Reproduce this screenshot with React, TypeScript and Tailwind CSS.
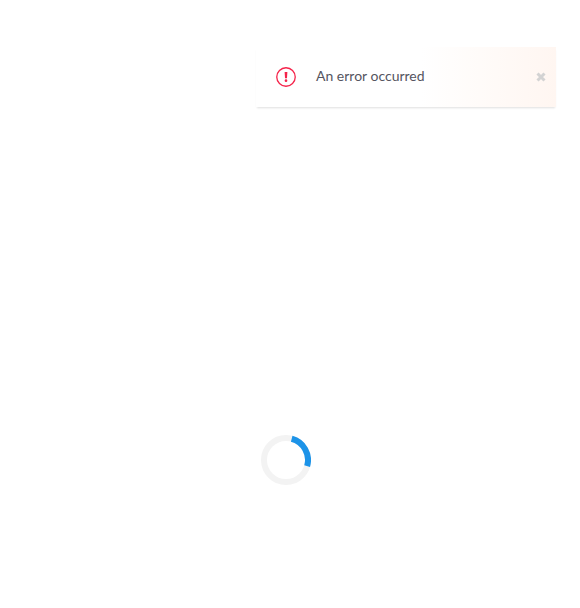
import React from 'react';

const polar = (r: number, deg: number) => {
  const a = ((deg - 90) * Math.PI) / 180;
  return `${25 + r * Math.cos(a)} ${25 + r * Math.sin(a)}`;
};

const Spinner: React.FC = () => (
  <svg width="50" height="50" viewBox="0 0 50 50" fill="none">
    <circle cx="25" cy="25" r="22" stroke="#f3f3f3" strokeWidth="6" />
    <path d={`M ${polar(22, 15)} A 22 22 0 0 1 ${polar(22, 106)}`} stroke="#1c93e8" strokeWidth="6" />
  </svg>
);

const ErrorIcon: React.FC = () => (
  <svg width="20" height="20" viewBox="0 0 20 20" fill="none">
    <circle cx="10" cy="10" r="9.25" stroke="#f5234a" strokeWidth="1.3" />
    <path d="M8.6 5h2.8l-.4 6.2H9z" fill="#f5234a" />
    <circle cx="10" cy="13.7" r="1.35" fill="#f5234a" />
  </svg>
);

const CloseIcon: React.FC = () => (
  <svg width="10" height="10" viewBox="0 0 10 10" fill="none">
    <path d="M1.5 1.5l7 7M8.5 1.5l-7 7" stroke="#d3d3d3" strokeWidth="3" />
  </svg>
);

export default function App() {
  return (
    <div className="relative h-[608px] w-full bg-white pl-[261px] pt-[435px] font-['Lato',sans-serif]">
      <div className="absolute right-[24px] top-[47px] flex h-[60px] w-[300px] items-center bg-gradient-to-r from-white from-[55%] to-[#fff6f1] pl-[20px] pr-[10px] shadow-[0_2px_2px_-1px_rgba(0,0,0,0.13)]">
        <ErrorIcon />
        <span className="mb-[4px] ml-[20px] flex-1 text-[14px] text-[#55555f]">An error occurred</span>
        <button className="flex items-center justify-center">
          <CloseIcon />
        </button>
      </div>
      <Spinner />
    </div>
  );
}
